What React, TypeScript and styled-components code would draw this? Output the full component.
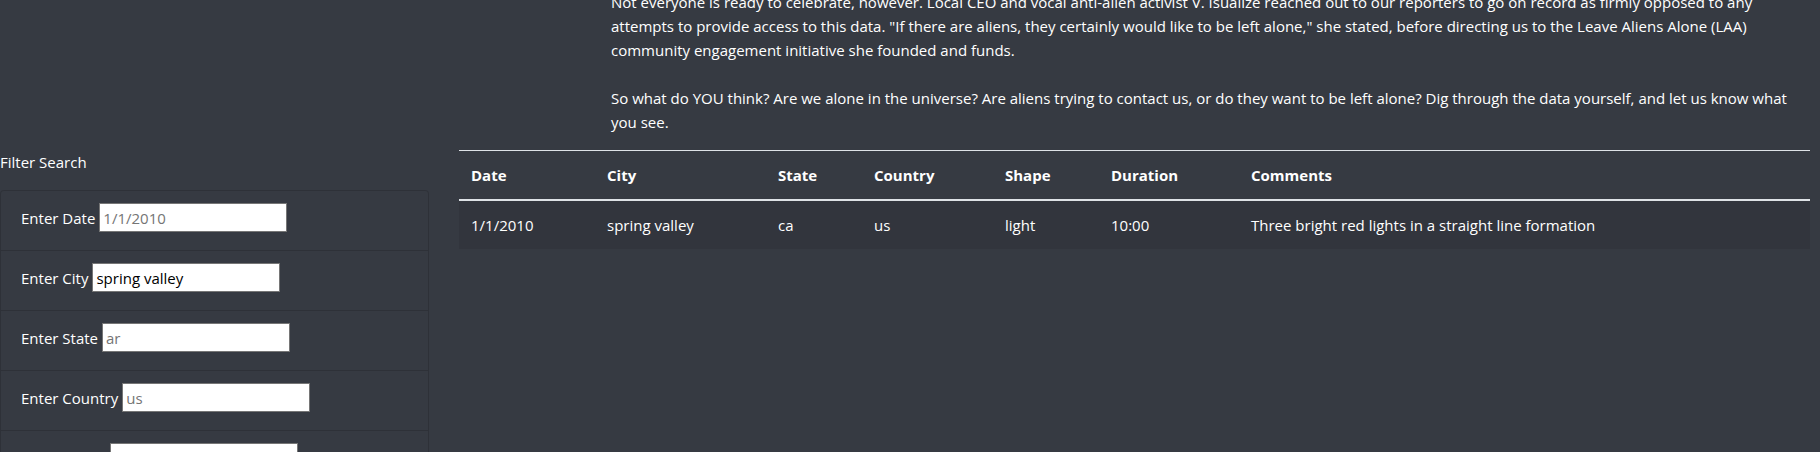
import React from 'react';
import styled, { createGlobalStyle } from 'styled-components';

const GlobalStyle = createGlobalStyle`
  body {
    margin: 0;
    background-color: #363a42;
    color: #ffffff;
    font-family: "Open Sans", "Noto Sans", sans-serif;
    font-size: 15px;
    line-height: 24px;
  }
`;

const Page = styled.div`
  height: 452px;
  overflow: hidden;
`;

const Intro = styled.div`
  box-sizing: border-box;
  margin-top: -10px;
  margin-bottom: 16px;
  padding: 0 10px 0 611px;
`;

const Paragraph = styled.p`
  margin: 0;
`;

const Main = styled.div`
  display: grid;
  grid-template-columns: 429px 1fr;
  column-gap: 30px;
  padding-right: 10px;
  align-items: start;
`;

const Sidebar = styled.div`
  display: flex;
  flex-direction: column;
`;

const SidebarTitle = styled.div`
  margin-bottom: 16px;
`;

const FilterList = styled.ul`
  list-style: none;
  margin: 0;
  padding: 0;
  border: 1px solid rgba(0, 0, 0, 0.14);
  border-bottom: none;
  border-radius: 4px 4px 0 0;
`;

const FilterItem = styled.li`
  box-sizing: border-box;
  display: flex;
  align-items: baseline;
  gap: 4px;
  height: 60px;
  padding: 12px 20px;
  border-top: 1px solid rgba(0, 0, 0, 0.14);

  &:first-child {
    height: 59px;
    border-top: none;
  }
`;

const FilterLabel = styled.label`
  white-space: nowrap;
`;

const FilterInput = styled.input`
  box-sizing: border-box;
  width: 188px;
  height: 29px;
  padding: 1px 3px;
  border: 1px solid #767676;
  border-radius: 0;
  background: #ffffff;
  color: #000000;
  font-family: inherit;
  font-size: 15px;
  line-height: 24px;
  outline: none;

  &::placeholder {
    color: #757575;
  }
`;

const Table = styled.table`
  width: 100%;
  border-collapse: collapse;
  table-layout: fixed;
`;

const HeadCell = styled.th<{ w?: number }>`
  box-sizing: border-box;
  width: ${props => (props.w ? `${props.w}px` : 'auto')};
  padding: 12px;
  text-align: left;
  font-weight: 700;
  border-top: 1px solid #dee2e6;
  border-bottom: 2px solid #dee2e6;
`;

const BodyRow = styled.tr`
  background-color: rgba(0, 0, 0, 0.07);
`;

const Cell = styled.td`
  padding: 12px;
  text-align: left;
`;

const filters = [
  { label: 'Enter Date', placeholder: '1/1/2010' },
  { label: 'Enter City', placeholder: 'los angeles', value: 'spring valley' },
  { label: 'Enter State', placeholder: 'ar' },
  { label: 'Enter Country', placeholder: 'us' },
  { label: 'Enter Shape', placeholder: 'light' },
];

const columns = [
  { title: 'Date', w: 136 },
  { title: 'City', w: 171 },
  { title: 'State', w: 96 },
  { title: 'Country', w: 131 },
  { title: 'Shape', w: 106 },
  { title: 'Duration', w: 140 },
  { title: 'Comments' },
];

const sightings = [
  ['1/1/2010', 'spring valley', 'ca', 'us', 'light', '10:00', 'Three bright red lights in a straight line formation'],
];

export default function App() {
  return (
    <Page>
      <GlobalStyle />
      <Intro>
        <Paragraph>
          Not everyone is ready to celebrate, however. Local CEO and vocal anti-alien activist V. Isualize reached out to our
          reporters to go on record as firmly opposed to any attempts to provide access to this data. "If there are aliens,
          they certainly would like to be left alone," she stated, before directing us to the Leave Aliens Alone (LAA)
          community engagement initiative she founded and funds.
          <br />
          <br />
          So what do YOU think? Are we alone in the universe? Are aliens trying to contact us, or do they want to be left
          alone? Dig through the data yourself, and let us know what you see.
        </Paragraph>
      </Intro>
      <Main>
        <Sidebar>
          <SidebarTitle>Filter Search</SidebarTitle>
          <FilterList>
            {filters.map(f => (
              <FilterItem key={f.label}>
                <FilterLabel>{f.label}</FilterLabel>
                <FilterInput placeholder={f.placeholder} defaultValue={f.value} />
              </FilterItem>
            ))}
          </FilterList>
        </Sidebar>
        <Table>
          <thead>
            <tr>
              {columns.map(c => (
                <HeadCell key={c.title} w={c.w}>{c.title}</HeadCell>
              ))}
            </tr>
          </thead>
          <tbody>
            {sightings.map((row, i) => (
              <BodyRow key={i}>
                {row.map((value, j) => (
                  <Cell key={j}>{value}</Cell>
                ))}
              </BodyRow>
            ))}
          </tbody>
        </Table>
      </Main>
    </Page>
  );
}
